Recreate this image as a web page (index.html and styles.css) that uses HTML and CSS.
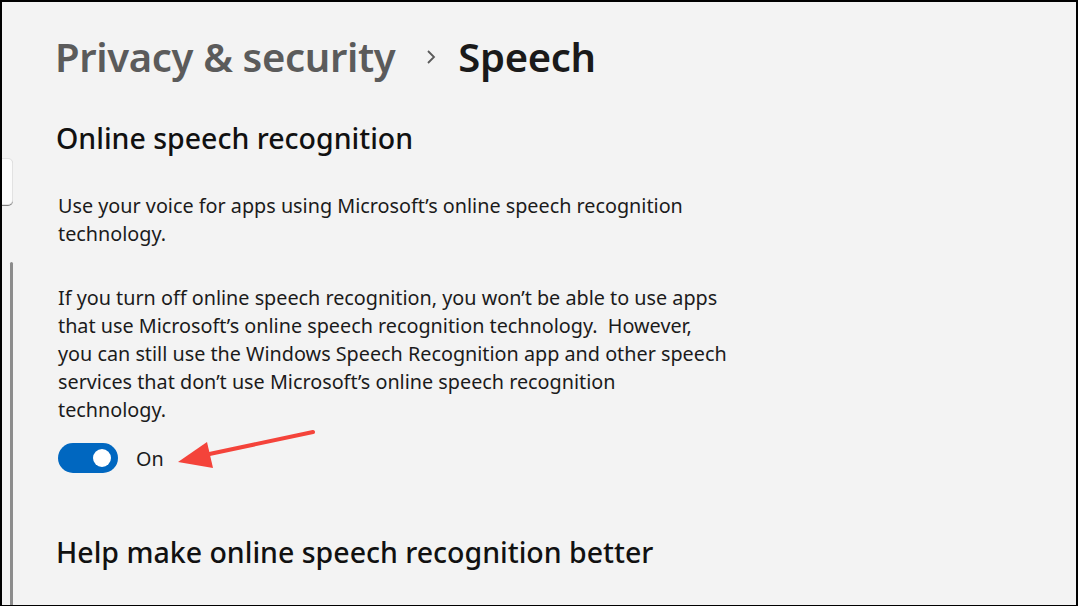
FILE: index.html
```html
<!DOCTYPE html>
<html lang="en">
<head>
    <meta charset="UTF-8">
    <meta name="viewport" content="width=device-width, initial-scale=1.0">
    <title>Speech - Settings</title>
    <link rel="stylesheet" href="styles.css">
</head>
<body>
    <div class="window">
        <div class="rail">
            <div class="rail-tab"></div>
            <div class="rail-scroll"></div>
        </div>

        <main class="content">
            <h1 class="crumbs">
                <span class="crumb-parent">Privacy &amp; security</span>
                <svg class="crumb-chevron" width="14" height="18" viewBox="0 0 14 18">
                    <path d="M4 3 L10 9 L4 15" fill="none" stroke="#5a5a5a" stroke-width="1.8"/>
                </svg>
                <span class="crumb-current">Speech</span>
            </h1>

            <h2 class="section-title">Online speech recognition</h2>
            <p class="desc">Use your voice for apps using Microsoft’s online speech recognition<br>technology.</p>
            <p class="desc gap">If you turn off online speech recognition, you won’t be able to use apps<br>that use Microsoft’s online speech recognition technology.&nbsp; However,<br>you can still use the Windows Speech Recognition app and other speech<br>services that don’t use Microsoft’s online speech recognition<br>technology.</p>

            <div class="toggle-row">
                <div class="toggle on"><span class="knob"></span></div>
                <span class="toggle-label">On</span>
            </div>

            <h2 class="section-title next">Help make online speech recognition better</h2>
        </main>

        <!-- red callout pointing at the switch -->
        <svg class="callout" width="150" height="60" viewBox="0 0 150 60">
            <line x1="143" y1="8" x2="30" y2="32" stroke="#f4433a" stroke-width="4" stroke-linecap="round"/>
            <polygon points="8,38 37,18 43,44" fill="#f4433a"/>
        </svg>
    </div>
</body>
</html>
```

FILE: styles.css
```css
* {
    box-sizing: border-box;
}
body {
    margin: 0;
    padding: 0;
    background: #f3f3f3;
    font-family: "Noto Sans", "Open Sans", sans-serif;
    color: #1b1b1b;
}
.window {
    position: relative;
    display: flex;
    width: 1078px;
    height: 606px;
    overflow: hidden;
    background: #f3f3f3;
    border-top: 2px solid #000;
    border-left: 2px solid #000;
    border-right: 2px solid #000;
    border-bottom: 1px solid #000;
}
.rail {
    width: 12px;
    flex-shrink: 0;
    display: flex;
    flex-direction: column;
}
.rail-tab {
    margin-top: 156px;
    height: 47px;
    width: 11px;
    background: #fbfbfb;
    border: 1px solid #e2e2e2;
    border-left: none;
    border-radius: 0 5px 5px 0;
    box-shadow: 0 1px 0 #808080;
}
.rail-scroll {
    margin-top: 57px;
    margin-left: 8px;
    width: 3px;
    flex: 1;
    background: #8c8c8c;
    border-radius: 2px 2px 0 0;
}
.content {
    flex: 1;
    padding-left: 41px;
}
.crumbs {
    display: flex;
    align-items: center;
    margin: 30px 0 0;
    font-size: 40px;
    font-weight: 600;
    line-height: 50px;
    letter-spacing: -0.35px;
}
.crumb-parent {
    color: #5b5b5b;
}
.crumb-chevron {
    margin: 0 20px 0 29px;
}
.crumb-current {
    color: #1a1a1a;
}
.section-title {
    margin: 36px 0 0 1px;
    font-size: 28.5px;
    font-weight: 500;
    line-height: 40px;
    color: #111;
}
.desc {
    margin: 34px 0 0 3px;
    width: 720px;
    font-size: 19.8px;
    line-height: 28px;
    color: #1b1b1b;
}
.desc.gap {
    margin-top: 36px;
}
.toggle-row {
    display: flex;
    align-items: center;
    margin: 19px 0 0 3px;
    height: 30px;
}
.toggle {
    width: 60px;
    height: 30px;
    border-radius: 15px;
    background: #0067c0;
    display: flex;
    align-items: center;
    justify-content: flex-end;
    padding-right: 7px;
}
.knob {
    width: 18px;
    height: 18px;
    border-radius: 50%;
    background: #fff;
}
.toggle-label {
    margin-left: 18px;
    font-size: 19.8px;
    color: #1b1b1b;
}
.section-title.next {
    margin-top: 59px;
}
.callout {
    position: absolute;
    left: 168px;
    top: 422px;
}
```
